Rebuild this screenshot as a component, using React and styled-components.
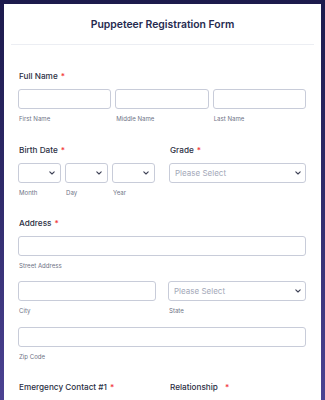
import React from "react";
import styled, { createGlobalStyle } from "styled-components";

const Global = createGlobalStyle`
  html, body { margin: 0; padding: 0; }
  body {
    background: linear-gradient(180deg, #1c1a4c 0%, #2f2a6a 45%, #4f4597 100%);
    min-height: 400px;
    font-family: Inter, "Noto Sans", "Liberation Sans", sans-serif;
    overflow: hidden;
  }
`;

const Card = styled.div`
  margin: 4px 4px 0 4px;
  background: #fff;
  min-height: 420px;
  box-sizing: border-box;
  padding: 0 7px;
`;

const Header = styled.div`
  height: 39px;
  border-bottom: 1px solid #eceef3;
  display: flex;
  align-items: center;
  justify-content: center;
  padding-top: 1px;
`;

const Title = styled.h1`
  margin: 0;
  font-size: 10.4px;
  font-weight: 600;
  color: #262a4f;
`;

const Body = styled.div`
  padding: 25px 8px 0 7px;
  display: flex;
  flex-direction: column;
`;

const Section = styled.div`
  display: grid;
  grid-template-columns: ${(p) => p.$cols || "1fr"};
  column-gap: ${(p) => p.$gap || 0}px;
  margin-bottom: ${(p) => p.$mb || 0}px;
`;

const Field = styled.div`
  display: flex;
  flex-direction: column;
`;

const Label = styled.div`
  font-size: 8.2px;
  font-weight: 500;
  color: #2c3044;
  height: 13px;
  line-height: 13px;
  margin-bottom: 6px;
  padding-left: 1px;
`;

const Star = styled.span`
  color: #f23a3c;
  margin-left: ${(p) => p.$ml || 3}px;
`;

const Row = styled.div`
  display: grid;
  grid-template-columns: ${(p) => p.$cols || "1fr"};
  column-gap: ${(p) => p.$gap || 4}px;
`;

const Col = styled.div`
  display: flex;
  flex-direction: column;
  margin-bottom: ${(p) => p.$mb || 0}px;
`;

const Input = styled.div`
  height: 20px;
  box-sizing: border-box;
  border: 1px solid #c8ccd9;
  border-radius: 3px;
  background: #fff;
`;

const Select = styled.div`
  height: 20px;
  box-sizing: border-box;
  border: 1px solid #c8ccd9;
  border-radius: 3px;
  background: #fff;
  display: flex;
  align-items: center;
  padding: 0 ${(p) => p.$pr || 5}px 0 5px;
`;

const Placeholder = styled.span`
  font-size: 8px;
  color: #a3a8b8;
`;

const Sub = styled.div`
  font-size: 6.1px;
  color: #6f7486;
  margin-top: 5px;
  line-height: 9px;
  padding-left: 1px;
`;

const Chevron = () => (
  <svg width="6" height="4" viewBox="0 0 6 4" style={{ marginLeft: "auto" }}>
    <path d="M0.8 0.8 L3 3 L5.2 0.8" stroke="#3d4155" strokeWidth="1.1" fill="none" strokeLinecap="round" strokeLinejoin="round" />
  </svg>
);

export default function App() {
  return (
    <>
      <Global />
      <Card>
        <Header>
          <Title>Puppeteer Registration Form</Title>
        </Header>
        <Body>
          <Section $mb={21}>
            <Field>
              <Label>Full Name<Star>*</Star></Label>
              <Row $cols="1fr 1fr 1fr" $gap={4}>
                <Col><Input /><Sub>First Name</Sub></Col>
                <Col><Input /><Sub>Middle Name</Sub></Col>
                <Col><Input /><Sub>Last Name</Sub></Col>
              </Row>
            </Field>
          </Section>
          <Section $cols="137px 1fr" $gap={14} $mb={20}>
            <Field>
              <Label>Birth Date<Star>*</Star></Label>
              <Row $cols="1fr 1fr 1fr" $gap={4}>
                <Col><Select><Chevron /></Select><Sub>Month</Sub></Col>
                <Col><Select><Chevron /></Select><Sub>Day</Sub></Col>
                <Col><Select><Chevron /></Select><Sub>Year</Sub></Col>
              </Row>
            </Field>
            <Field>
              <Label>Grade<Star>*</Star></Label>
              <Select $pr={4}><Placeholder>Please Select</Placeholder><Chevron /></Select>
            </Field>
          </Section>
          <Section $mb={20}>
            <Field>
              <Label>Address<Star>*</Star></Label>
              <Col $mb={11}><Input /><Sub>Street Address</Sub></Col>
              <Row $cols="1fr 1fr" $gap={12}>
                <Col $mb={12}><Input /><Sub>City</Sub></Col>
                <Col $mb={12}><Select $pr={4}><Placeholder>Please Select</Placeholder><Chevron /></Select><Sub>State</Sub></Col>
              </Row>
              <Col><Input /><Sub>Zip Code</Sub></Col>
            </Field>
          </Section>
          <Section $cols="137px 1fr" $gap={14}>
            <Field>
              <Label>Emergency Contact #1<Star>*</Star></Label>
              <Row $cols="1fr 1fr" $gap={4}>
                <Input />
                <Input />
              </Row>
            </Field>
            <Field>
              <Label>Relationship<Star $ml={7}>*</Star></Label>
              <Input />
            </Field>
          </Section>
        </Body>
      </Card>
    </>
  );
}
